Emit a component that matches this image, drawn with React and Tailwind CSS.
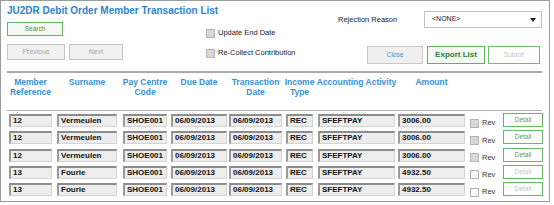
import React from 'react';

const rows = [
  { ref: '12', surname: 'Vermeulen', code: 'SHOE001', due: '06/09/2013', trans: '06/09/2013', type: 'REC', activity: 'SFEFTPAY', amount: '3006.00', active: true },
  { ref: '12', surname: 'Vermeulen', code: 'SHOE001', due: '06/09/2013', trans: '06/09/2013', type: 'REC', activity: 'SFEFTPAY', amount: '3006.00', active: true },
  { ref: '12', surname: 'Vermeulen', code: 'SHOE001', due: '06/09/2013', trans: '06/09/2013', type: 'REC', activity: 'SFEFTPAY', amount: '3006.00', active: true },
  { ref: '13', surname: 'Fourie', code: 'SHOE001', due: '06/09/2013', trans: '06/09/2013', type: 'REC', activity: 'SFEFTPAY', amount: '4932.50', active: false },
  { ref: '13', surname: 'Fourie', code: 'SHOE001', due: '06/09/2013', trans: '06/09/2013', type: 'REC', activity: 'SFEFTPAY', amount: '4932.50', active: false },
];

const grid = 'grid grid-cols-[48px_66px_48px_58px_57px_32px_80px_72px_33px_40px]';

function Field({ w, children }) {
  return (
    <div
      className={`${w} h-[13px] bg-[#ededed] border-t-2 border-l-2 border-r border-b border-t-[#8c8c8c] border-l-[#9a9a9a] border-r-[#d4d4d4] border-b-[#d4d4d4] pl-[2px] text-[8px] leading-[10px] font-bold text-[#111] whitespace-nowrap overflow-hidden`}
    >
      {children}
    </div>
  );
}

function Head({ w, lines }) {
  return (
    <div className={`${w} flex flex-col items-center text-[8.5px] leading-[10px] font-bold text-[#3a8fd2] whitespace-nowrap`}>
      {lines.map((l) => (
        <span key={l}>{l}</span>
      ))}
    </div>
  );
}

function Box({ filled = true }) {
  return (
    <span
      className={`inline-block w-[9px] h-[9px] border border-[#b4b4b4] ${filled ? 'bg-[#d8d8d8]' : 'bg-[#f6f6f6]'}`}
    ></span>
  );
}

export default function App() {
  return (
    <div className="w-[550px] h-[202px] border border-[#9c9c9c] bg-white font-['Liberation_Sans',Arial,sans-serif]">
      {/* top controls */}
      <div className="flex h-[70px] pl-[6px]">
        <div className="w-[199px]">
          <div className="pt-[4px] text-[10px] leading-[12px] font-bold text-[#2f83c9] whitespace-nowrap">
            JU2DR Debit Order Member Transaction List
          </div>
          <button className="mt-[5px] w-[56px] h-[14px] border border-[#63b463] bg-[#f3f8f2] text-[6.5px] text-[#4d8f4d] flex items-center justify-center">
            Search
          </button>
          <div className="flex gap-[4px] mt-[8px]">
            <button className="w-[58px] h-[16px] border border-[#c4c4c4] bg-[#f1f1f1] text-[7px] text-[#a8a8a8] flex items-center justify-center">
              Previous
            </button>
            <button className="w-[54px] h-[16px] border border-[#c4c4c4] bg-[#f1f1f1] text-[7px] text-[#a8a8a8] flex items-center justify-center">
              Next
            </button>
          </div>
        </div>

        <div className="w-[132px] pt-[27px] flex flex-col gap-[10px]">
          <label className="flex items-center gap-[3px] h-[10px] text-[7.5px] text-[#222] whitespace-nowrap">
            <Box />
            Update End Date
          </label>
          <label className="flex items-center gap-[3px] h-[10px] text-[7.5px] text-[#222] whitespace-nowrap">
            <Box />
            Re-Collect Contribution
          </label>
        </div>

        <div className="flex-1">
          <div className="flex items-center mt-[10px] h-[17px]">
            <div className="w-[86px] text-[7.5px] text-[#222]">Rejection Reason</div>
            <div className="w-[118px] h-[17px] border border-[#c2c2c2] bg-white flex items-center justify-between pl-[7px] pr-[5px]">
              <span className="text-[7px] text-[#222]">&lt;NONE&gt;</span>
              <svg width="6" height="4" viewBox="0 0 6 4">
                <path d="M0 0h6L3 4z" fill="#222" />
              </svg>
            </div>
          </div>
          <div className="flex mt-[18px] ml-[29px]">
            <button className="w-[56px] h-[18px] border border-[#c8c8c8] bg-[#efefef] text-[6.5px] text-[#3f8ccc] flex items-center justify-center">
              Close
            </button>
            <button className="ml-[4px] w-[58px] h-[18px] border border-[#5fb35f] bg-[#f4f9f3] text-[8px] font-bold text-[#2f7d2f] flex items-center justify-center">
              Export List
            </button>
            <button className="ml-[3px] w-[52px] h-[18px] border border-[#72bc72] bg-white text-[6.5px] text-[#c4c4c4] flex items-center justify-center">
              Submit
            </button>
          </div>
        </div>
      </div>

      <div className="ml-[6px] w-[535px] h-[2px] bg-[#a9a9a9]"></div>

      {/* column headers */}
      <div className={`${grid} ml-[8px] h-[37px] pt-[4px]`}>
        <Head w="w-[43px]" lines={['Member', 'Reference']} />
        <Head w="w-[60px]" lines={['Surname']} />
        <Head w="w-[44px]" lines={['Pay Centre', 'Code']} />
        <Head w="w-[56px]" lines={['Due Date']} />
        <Head w="w-[53px]" lines={['Transaction', 'Date']} />
        <Head w="w-[27px]" lines={['Income', 'Type']} />
        <Head w="w-[77px]" lines={['Accounting Activity']} />
        <Head w="w-[67px]" lines={['Amount']} />
      </div>

      <div className="ml-[6px] w-[535px] h-[1px] bg-[#b0b0b0]"></div>

      {/* rows */}
      <div className="ml-[8px] mt-[3px]">
        {rows.map((r, i) => (
          <div key={i} className={`${grid} h-[17.25px] items-start`}>
            <Field w="w-[43px]">{r.ref}</Field>
            <Field w="w-[60px]">{r.surname}</Field>
            <Field w="w-[44px]">{r.code}</Field>
            <Field w="w-[56px]">{r.due}</Field>
            <Field w="w-[53px]">{r.trans}</Field>
            <Field w="w-[27px]">{r.type}</Field>
            <Field w="w-[77px]">{r.activity}</Field>
            <Field w="w-[67px]">{r.amount}</Field>
            <label className="flex items-center gap-[3px] h-[14px] pt-[4px] text-[7.5px] text-[#333]">
              <Box filled={r.active} />
              Rev
            </label>
            <button
              className={`w-[40px] h-[14px] -mt-[1px] border border-[#66b866] bg-white text-[6.5px] flex items-center justify-center ${
                r.active ? 'text-[#5a9b5a]' : 'text-[#bccbbc]'
              }`}
            >
              Detail
            </button>
          </div>
        ))}
      </div>
    </div>
  );
}
